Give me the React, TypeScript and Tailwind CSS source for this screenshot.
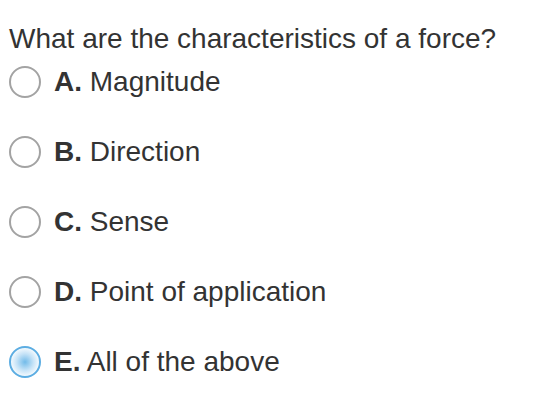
const options = [
  { letter: 'A.', text: 'Magnitude' },
  { letter: 'B.', text: 'Direction' },
  { letter: 'C.', text: 'Sense' },
  { letter: 'D.', text: 'Point of application' },
  { letter: 'E.', text: 'All of the above', checked: true },
];

export default function App() {
  return (
    <div
      className="w-[538px] h-[412px] bg-white text-[#333] pl-[9px] pt-[21px]"
      style={{ fontFamily: '"Liberation Sans", Arial, sans-serif' }}
    >
      <h2 className="text-[28px] leading-[36px]">
        What are the characteristics of a force?
      </h2>
      <ul className="flex flex-col gap-[38px] mt-[9px]">
        {options.map((o) => (
          <li key={o.letter} className="flex items-center h-[32px]">
            {o.checked ? (
              <span className="w-[32px] h-[32px] rounded-full border-2 border-[#5cade2] bg-[radial-gradient(circle,#72bbe9_0%,#c6e3f7_42%,#ffffff_78%)]" />
            ) : (
              <span className="w-[32px] h-[32px] rounded-full border-2 border-[#a3a3a3] bg-white" />
            )}
            <span className="ml-[13px] text-[28px] leading-[32px]">
              <b className="font-bold">{o.letter}</b> {o.text}
            </span>
          </li>
        ))}
      </ul>
    </div>
  );
}
